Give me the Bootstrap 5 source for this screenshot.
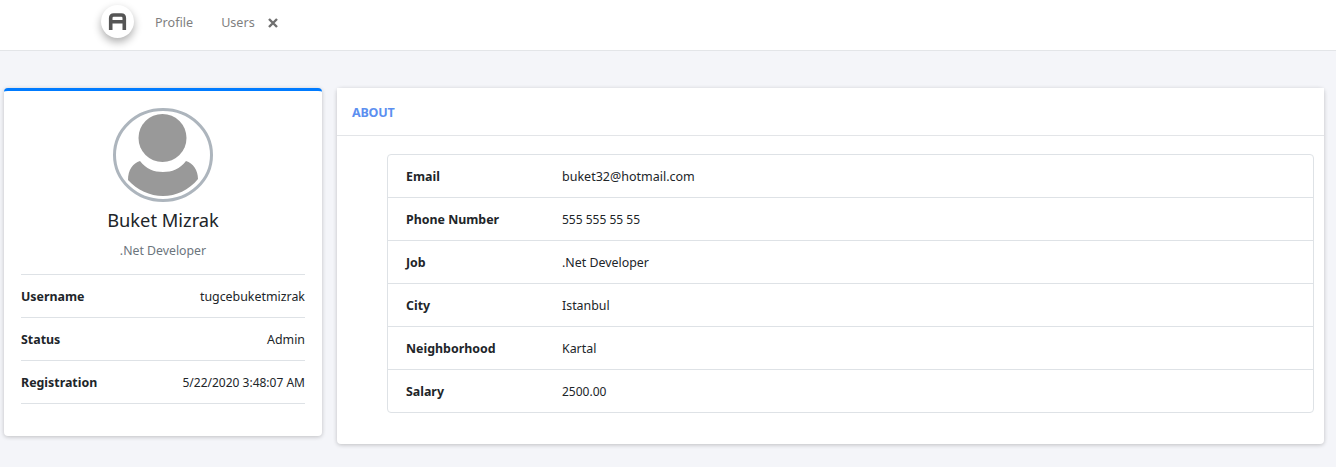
<!DOCTYPE html>
<html lang="en">
<head>
<meta charset="utf-8">
<title>Profile</title>
<link rel="stylesheet" href="https://cdn.jsdelivr.net/npm/bootstrap@5.3.0/dist/css/bootstrap.min.css">
<style>
html, body { height: 100%; }
body { background: #f4f5f9; font-family: "Noto Sans", "Liberation Sans", sans-serif; font-size: 12.4px; line-height: 20px; color: #212529; overflow: hidden; }
.top-strip { height: 51px; background: #fff; border-bottom: 1px solid #e3e5e8; padding-left: 101px; padding-bottom: 4px; }
.logo-disc { width: 33px; height: 33px; border-radius: 50%; background: #fff; box-shadow: 0 4px 9px rgba(0,0,0,.32); margin-right: 21px; margin-top: -3px; }
.tab-text { color: #7f7f7f; font-size: 12.6px; text-decoration: none; }
.tab-users { margin-left: 28px; margin-right: 13px; }
.page-area { padding: 37px 12px 0 4px; gap: 15px; }
.profile-panel, .about-panel { border: 0; border-radius: 4px; box-shadow: 0 1px 4px rgba(0,0,0,.22); }
.profile-panel { width: 318px; border-top: 3px solid #007bff; flex: none; padding: 17px 17px 32px; }
.about-panel { flex: 1 1 auto; height: 356px; }
.about-head { height: 48px; padding: 3px 0 0 15px; border-bottom: 1px solid #e3e5e8; background: #fff; color: #5c8ff0; font-weight: 700; font-size: 12.5px; letter-spacing: -.2px; }
.avatar-pic { display: block; width: 100px; height: 94px; margin: 0 auto; flex: none; }
.person-name { font-size: 18.3px; font-weight: 400; line-height: 24px; margin: 6px 0 0; text-align: center; color: #212529; }
.person-job { text-align: center; color: #6c757d; line-height: 18px; margin: 10px 0 14px; font-size: 12.3px; }
.meta-row { height: 43px; border-top: 1px solid #dee2e6; padding-top: 12px; }
.meta-row:last-child { height: 44px; border-bottom: 1px solid #dee2e6; }
.meta-label { font-weight: 700; }
.about-body { padding: 18px 10px 0 50px; }
.about-list { border: 1px solid #dee2e6; border-radius: 4px; }
.about-row { height: 43px; padding: 12px 0 0 18px; border-top: 1px solid #dee2e6; }
.about-row:first-child { border-top: 0; height: 42px; }
.about-key { width: 156px; font-weight: 700; }
.digit-text { font-size: 12px; }
.mail-text { font-size: 12.5px; }
</style>
</head>
<body>
<nav class="top-strip d-flex align-items-center">
  <div class="logo-disc d-flex align-items-center justify-content-center">
    <svg width="19" height="19" viewBox="0 0 19 19" aria-hidden="true"><path d="M2.7 18V6Q2.7 3 5.7 3H13.3Q16.3 3 16.3 6V18M2.7 9.7H16.3" fill="none" stroke="#555" stroke-width="3.6"/></svg>
  </div>
  <a class="tab-text" href="#">Profile</a>
  <a class="tab-text tab-users" href="#">Users</a>
  <svg width="10" height="10" viewBox="0 0 10 10" aria-hidden="true"><path d="M1 1L9 9M9 1L1 9" stroke="#6f6f6f" stroke-width="2.4"/></svg>
</nav>
<main class="page-area d-flex align-items-start">
  <section class="card profile-panel">
    <svg class="avatar-pic" viewBox="0 0 100 94" aria-hidden="true">
      <ellipse cx="50" cy="47" rx="48.5" ry="45.5" fill="#fff" stroke="#adb5bd" stroke-width="3"/>
      <circle cx="49.5" cy="30" r="24" fill="#999"/>
      <path d="M27 53C33 61 41 64 50 64C59 64 67 61 73 53C80 55 85 62 85 71C76 82 63 88 50 88C37 88 24 82 15 72C15 62 20 55 27 53Z" fill="#999"/>
    </svg>
    <h1 class="person-name">Buket Mizrak</h1>
    <p class="person-job">.Net Developer</p>
    <div class="meta-row d-flex align-items-baseline justify-content-between"><span class="meta-label">Username</span><span>tugcebuketmizrak</span></div>
    <div class="meta-row d-flex align-items-baseline justify-content-between"><span class="meta-label">Status</span><span>Admin</span></div>
    <div class="meta-row d-flex align-items-baseline justify-content-between"><span class="meta-label">Registration</span><span class="digit-text">5/22/2020 3:48:07 AM</span></div>
  </section>
  <section class="card about-panel">
    <div class="about-head d-flex align-items-center">ABOUT</div>
    <div class="about-body">
      <div class="about-list">
        <div class="about-row d-flex align-items-baseline"><span class="about-key">Email</span><span class="mail-text">buket32@hotmail.com</span></div>
        <div class="about-row d-flex align-items-baseline"><span class="about-key">Phone Number</span><span class="digit-text">555 555 55 55</span></div>
        <div class="about-row d-flex align-items-baseline"><span class="about-key">Job</span><span>.Net Developer</span></div>
        <div class="about-row d-flex align-items-baseline"><span class="about-key">City</span><span>Istanbul</span></div>
        <div class="about-row d-flex align-items-baseline"><span class="about-key">Neighborhood</span><span>Kartal</span></div>
        <div class="about-row d-flex align-items-baseline"><span class="about-key">Salary</span><span class="digit-text">2500.00</span></div>
      </div>
    </div>
  </section>
</main>
<script src="https://cdn.jsdelivr.net/npm/bootstrap@5.3.0/dist/js/bootstrap.bundle.min.js"></script>
</body>
</html>
